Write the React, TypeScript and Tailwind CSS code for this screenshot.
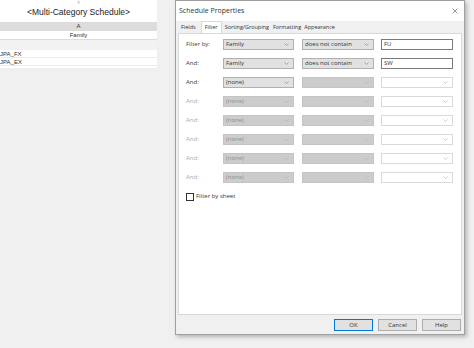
import React from 'react';

const uiFont = { fontFamily: '"Open Sans", "Liberation Sans", sans-serif' };
const schedFont = { fontFamily: '"Liberation Sans", Arial, sans-serif' };

function Chevron({ color = '#8a8a8a' }: { color?: string }) {
  return (
    <svg width="5" height="3" viewBox="0 0 5 3" className="shrink-0">
      <path d="M0.5 0.5 L2.5 2.5 L4.5 0.5" fill="none" stroke={color} strokeWidth="0.7" />
    </svg>
  );
}

type Row = {
  label: string;
  enabled: boolean;
  field: string;
  fieldEnabled: boolean;
  op?: string;
  value?: string;
};

const ROWS: Row[] = [
  { label: 'Filter by:', enabled: true, field: 'Family', fieldEnabled: true, op: 'does not contain', value: 'FU' },
  { label: 'And:', enabled: true, field: 'Family', fieldEnabled: true, op: 'does not contain', value: 'SW' },
  { label: 'And:', enabled: true, field: '(none)', fieldEnabled: true },
  { label: 'And:', enabled: false, field: '(none)', fieldEnabled: false },
  { label: 'And:', enabled: false, field: '(none)', fieldEnabled: false },
  { label: 'And:', enabled: false, field: '(none)', fieldEnabled: false },
  { label: 'And:', enabled: false, field: '(none)', fieldEnabled: false },
  { label: 'And:', enabled: false, field: '(none)', fieldEnabled: false },
];

function FilterRow({ row }: { row: Row }) {
  return (
    <div className="flex h-[11px] items-center">
      <div className={`w-[37px] text-[6px] ${row.enabled ? 'text-[#3a3a3a]' : 'text-[#ababab]'}`}>{row.label}</div>
      <div
        className={`flex h-[11px] w-[71px] items-center justify-between border px-[2px] pr-[4px] text-[6px] ${
          row.fieldEnabled ? 'border-[#b0b0b0] bg-[#e1e1e1] text-[#333]' : 'border-[#c4c4c4] bg-[#cccccc] text-[#8e8e8e]'
        }`}
      >
        <span>{row.field}</span>
        <Chevron color={row.fieldEnabled ? '#8a8a8a' : '#b0b0b0'} />
      </div>
      <div
        className={`ml-[8px] flex h-[11px] w-[72px] items-center justify-between border px-[2px] pr-[4px] text-[6px] ${
          row.op ? 'border-[#b0b0b0] bg-[#e1e1e1] text-[#333]' : 'border-[#c4c4c4] bg-[#cccccc]'
        }`}
      >
        <span>{row.op ?? ''}</span>
        <Chevron color={row.op ? '#8a8a8a' : '#b8b8b8'} />
      </div>
      {row.value !== undefined ? (
        <div className="ml-[7px] flex h-[11px] w-[72px] items-center border border-[#7a7a7a] bg-white px-[2px] text-[6px] text-[#333]">
          {row.value}
        </div>
      ) : (
        <div className="ml-[7px] flex h-[11px] w-[72px] items-center justify-end border border-[#d9d9d9] bg-white pr-[4px]">
          <Chevron color="#b8b8b8" />
        </div>
      )}
    </div>
  );
}

export default function App() {
  return (
    <div className="flex h-[348px] w-[474px] overflow-hidden bg-[#f0f0f0] text-[#333]" style={uiFont}>
      {/* Schedule view */}
      <div className="flex h-[68px] w-[157px] flex-col bg-white text-[#333]" style={schedFont}>
        <div className="h-[4px] text-center text-[4px] leading-[4px] text-[#777]">ij</div>
        <div className="h-[18px] text-center text-[8.5px] leading-[16px] text-[#222]">&lt;Multi-Category Schedule&gt;</div>
        <div className="h-[9px] bg-[#dcdcdc] text-center text-[6px] leading-[9px]">A</div>
        <div className="h-[9px] border-b border-[#dcdcdc] text-center text-[6px] leading-[9px]">Family</div>
        <div className="h-[10px] bg-[#f2f2f2]" />
        <div className="h-[8px] border-b border-[#ececec] text-[6px] leading-[8px]">JPA_FX</div>
        <div className="h-[8px] border-b border-[#ececec] text-[6px] leading-[8px]">JPA_EX</div>
      </div>

      {/* Dialog */}
      <div className="ml-[18px] flex h-[335px] w-[290px] flex-col border border-[#a0a0a0] bg-[#f0f0f0] shadow-[2px_2px_4px_rgba(0,0,0,0.25)]">
        <div className="flex h-[20px] items-center justify-between bg-white pl-[3px] pr-[6px]">
          <span className="text-[7px] text-[#333]">Schedule Properties</span>
          <svg width="6" height="6" viewBox="0 0 6 6">
            <path d="M0.5 0.5 L5.5 5.5 M5.5 0.5 L0.5 5.5" stroke="#555" strokeWidth="0.6" />
          </svg>
        </div>
        <div className="flex h-[12px] items-end pl-[3px] text-[5.5px]">
          <div className="px-[2px] pb-[2px] pt-[2px]">Fields</div>
          <div className="ml-[3px] border border-b-0 border-[#d9d9d9] bg-white px-[3px] pb-[2px] pt-[1px]">Filter</div>
          <div className="ml-[1px] px-[2px] pb-[2px]">Sorting/Grouping</div>
          <div className="px-[2px] pb-[2px]">Formatting</div>
          <div className="px-[1px] pb-[2px]">Appearance</div>
        </div>
        <div className="mx-[2px] h-[282px] border border-[#d9d9d9] bg-white pl-[7px] pt-[5px]">
          <div className="flex flex-col gap-[8px]">
            {ROWS.map((r, i) => (
              <FilterRow key={i} row={r} />
            ))}
          </div>
          <div className="mt-[9px] flex items-center">
            <div className="h-[8px] w-[8px] border border-[#333] bg-white" />
            <span className="ml-[2px] text-[6px]">Filter by sheet</span>
          </div>
        </div>
        <div className="flex justify-end gap-[5px] pr-[3px] pt-[4px]">
          <button className="h-[12px] w-[39px] border border-[#0078d7] bg-[#e1e1e1] text-[6px]">OK</button>
          <button className="h-[12px] w-[39px] border border-[#adadad] bg-[#e1e1e1] text-[6px]">Cancel</button>
          <button className="h-[12px] w-[39px] border border-[#adadad] bg-[#e1e1e1] text-[6px]">Help</button>
        </div>
      </div>
    </div>
  );
}
